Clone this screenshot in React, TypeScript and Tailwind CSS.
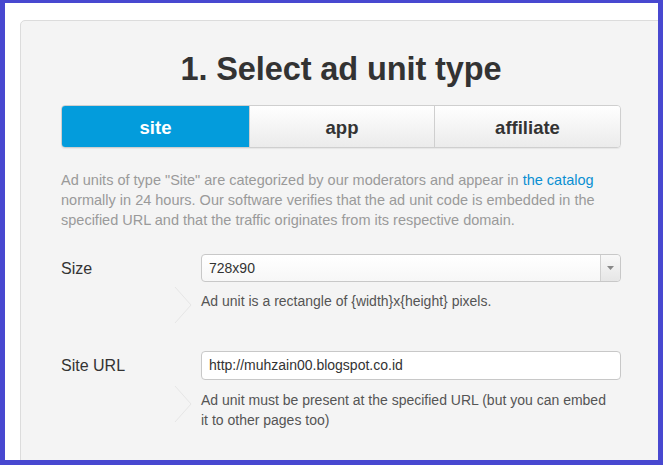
import React from "react";

function Chevron() {
  return (
    <svg width="20" height="40" viewBox="0 0 20 40" className="absolute left-[-28px] top-[-6px]">
      <polyline points="2,2 18,20 2,38" fill="none" stroke="#e6e6e6" strokeWidth="1" />
    </svg>
  );
}

export default function App() {
  return (
    <div
      className="w-[663px] h-[465px] bg-[#4848d0] pt-[3px] pl-[5px] pr-[5px] pb-[5px] overflow-hidden"
      style={{ fontFamily: '"Liberation Sans", Arial, sans-serif' }}
    >
      <div className="w-full h-full bg-white overflow-hidden pl-[15px] pt-[17px]">
        <div className="w-[700px] h-[600px] bg-[#f4f4f4] border border-[#dcdcdc] rounded-[5px] pl-[40px] pt-[29px]">
          <div className="w-[560px]">
            <h1 className="text-[32.5px] leading-[38px] font-bold text-[#333] text-center tracking-[-0.1px]">
              1. Select ad unit type
            </h1>
            <div className="mt-[17px] flex h-[43px] rounded-[4px] border border-[#cfcfcf] overflow-hidden shadow-[0_1px_1px_rgba(0,0,0,0.06)]">
              <div className="w-[187px] bg-[#039cdc] text-white font-bold text-[18.5px] flex items-center justify-center pt-[3px]">
                site
              </div>
              <div className="w-[185px] border-l border-[#cfcfcf] bg-gradient-to-b from-[#ffffff] to-[#ebebeb] text-[#333] font-bold text-[18.5px] flex items-center justify-center pt-[3px]">
                app
              </div>
              <div className="flex-1 border-l border-[#cfcfcf] bg-gradient-to-b from-[#ffffff] to-[#ebebeb] text-[#333] font-bold text-[18.5px] flex items-center justify-center pt-[3px]">
                affiliate
              </div>
            </div>
            <p className="mt-[22px] text-[14.5px] leading-[20px] text-[#9a9a9a]">
              Ad units of type "Site" are categorized by our moderators and appear in{" "}
              <span className="text-[#0a8fd2]">the catalog</span> normally in 24 hours. Our software verifies that the ad unit code is embedded in the specified URL and that the traffic originates from its respective domain.
            </p>

            <div className="mt-[24px] flex">
              <div className="w-[140px] text-[16px] text-[#333] pt-[5px] leading-[20px]">Size</div>
              <div className="flex-1">
                <div className="h-[28px] rounded-[4px] border border-[#c8c8c8] bg-gradient-to-b from-white to-[#f7f7f7] flex">
                  <div className="flex-1 pl-[7px] text-[14px] text-[#333] leading-[26px]">728x90</div>
                  <div className="w-[20px] border-l border-[#d0d0d0] bg-gradient-to-b from-[#f8f8f8] to-[#e6e6e6] rounded-r-[4px] flex items-center justify-center">
                    <svg width="7" height="4" viewBox="0 0 7 4">
                      <polygon points="0,0 7,0 3.5,4" fill="#888" />
                    </svg>
                  </div>
                </div>
                <div className="relative mt-[9px] text-[14px] leading-[20px] text-[#555]">
                  <Chevron />
                  Ad unit is a rectangle of {"{width}"}x{"{height}"} pixels.
                </div>
              </div>
            </div>

            <div className="mt-[40px] flex">
              <div className="w-[140px] text-[16px] text-[#333] pt-[5px] leading-[20px]">Site URL</div>
              <div className="flex-1">
                <div className="h-[29px] rounded-[4px] border border-[#c8c8c8] bg-white pl-[7px] text-[14px] text-[#333] leading-[27px]">
                  http://muhzain00.blogspot.co.id
                </div>
                <div className="relative mt-[10px] text-[14px] leading-[20px] text-[#555] pr-[10px]">
                  <Chevron />
                  Ad unit must be present at the specified URL (but you can embed it to other pages too)
                </div>
              </div>
            </div>
          </div>
        </div>
      </div>
    </div>
  );
}
